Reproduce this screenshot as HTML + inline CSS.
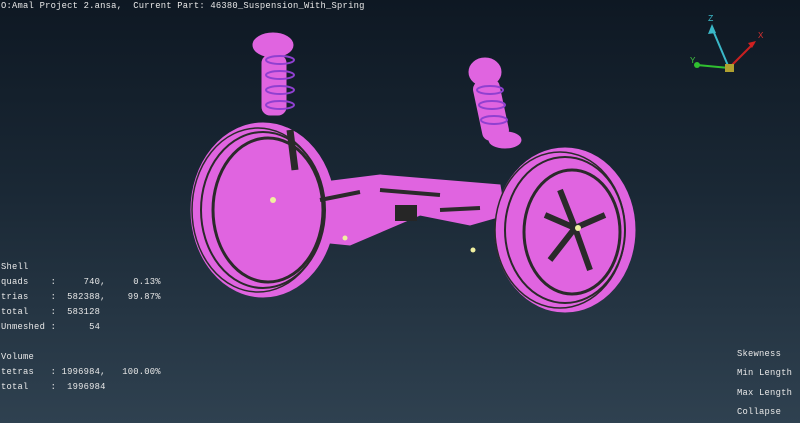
<!DOCTYPE html>
<html><head><style>
html,body{margin:0;padding:0}
body{width:800px;height:423px;overflow:hidden;background:linear-gradient(#0e1823,#1a2835 45%,#2f4150);position:relative;font-family:"Liberation Mono",monospace;color:#e8e8e8;font-size:8.8px;letter-spacing:0.23px}
.t{position:absolute;white-space:pre;line-height:10px}
svg{position:absolute;left:0;top:0}
</style></head><body>
<svg width="800" height="423">
<g fill="#e064e0" stroke="#e064e0">
<ellipse cx="273" cy="45" rx="20" ry="12"/>
<rect x="262" y="55" width="24" height="60" rx="8"/>
<ellipse cx="485" cy="72" rx="16" ry="14"/>
<rect x="478" y="80" width="26" height="60" rx="8" transform="rotate(-12 490 110)"/>
<ellipse cx="505" cy="140" rx="16" ry="8"/>
<path d="M300 185 L380 175 L500 185 L505 215 L470 225 L420 215 L350 245 L300 240 Z"/>
<ellipse cx="263" cy="210" rx="72" ry="87"/>
<ellipse cx="565" cy="230" rx="70" ry="82"/>
</g>
<g fill="none" stroke="#9040d0" stroke-width="2">
<ellipse cx="280" cy="60" rx="14" ry="4"/><ellipse cx="280" cy="75" rx="14" ry="4"/><ellipse cx="280" cy="90" rx="14" ry="4"/><ellipse cx="280" cy="105" rx="14" ry="4"/>
<ellipse cx="490" cy="90" rx="13" ry="4"/><ellipse cx="492" cy="105" rx="13" ry="4"/><ellipse cx="494" cy="120" rx="13" ry="4"/>
</g>
<g fill="none" stroke="#2a2a2a" stroke-width="2">
<ellipse cx="258" cy="210" rx="66" ry="82" stroke-width="1.5"/>
<ellipse cx="263" cy="210" rx="62" ry="78"/>
<ellipse cx="268" cy="210" rx="55" ry="72" stroke-width="3"/>
<ellipse cx="560" cy="230" rx="65" ry="78" stroke-width="1.5"/>
<ellipse cx="565" cy="230" rx="60" ry="73"/>
<ellipse cx="572" cy="232" rx="48" ry="62" stroke-width="3"/>
<path d="M380 190 L440 195 M320 200 L360 192 M440 210 L480 208" stroke-width="4"/>
<path d="M290 130 L295 170" stroke-width="7"/>
<path d="M575 228 L560 190 M575 228 L605 215 M575 228 L590 270 M575 228 L550 260 M575 228 L545 215" stroke-width="6"/>
</g>
<rect x="395" y="205" width="22" height="16" fill="#262626"/>
<g fill="#f0f0a0"><circle cx="273" cy="200" r="3"/><circle cx="345" cy="238" r="2.5"/><circle cx="473" cy="250" r="2.5"/><circle cx="578" cy="228" r="3"/></g>
<line x1="729" y1="68" x2="712" y2="28" stroke="#3ab8c8" stroke-width="2"/>
<polygon points="712,24 708,34 716,33" fill="#3ab8c8"/>
<line x1="729" y1="68" x2="754" y2="43" stroke="#c82020" stroke-width="2"/>
<polygon points="756,41 748,43 752,48" fill="#d02020"/>
<line x1="729" y1="68" x2="697" y2="65" stroke="#30c030" stroke-width="2"/>
<circle cx="697" cy="65" r="3" fill="#30c030"/>
<rect x="725" y="64" width="9" height="8" fill="#b0a030"/>
<text x="708" y="21" fill="#3ab8c8" font-size="9" font-family="Liberation Mono">Z</text>
<text x="758" y="38" fill="#d03030" font-size="9" font-family="Liberation Mono">X</text>
<text x="690" y="63" fill="#40c040" font-size="9" font-family="Liberation Mono">Y</text>
</svg>
<div class="t" style="left:1px;top:1px">O:Amal Project 2.ansa,  Current Part: 46380_Suspension_With_Spring</div>
<div class="t" style="left:1px;top:262px">Shell</div>
<div class="t" style="left:1px;top:277px">quads    :     740,     0.13%</div>
<div class="t" style="left:1px;top:292px">trias    :  582388,    99.87%</div>
<div class="t" style="left:1px;top:307px">total    :  583128</div>
<div class="t" style="left:1px;top:322px">Unmeshed :      54</div>
<div class="t" style="left:1px;top:352px">Volume</div>
<div class="t" style="left:1px;top:367px">tetras   : 1996984,   100.00%</div>
<div class="t" style="left:1px;top:382px">total    :  1996984</div>
<div class="t" style="left:737px;top:349px">Skewness</div>
<div class="t" style="left:737px;top:368px">Min Length</div>
<div class="t" style="left:737px;top:388px">Max Length</div>
<div class="t" style="left:737px;top:407px">Collapse</div>
</body></html>
